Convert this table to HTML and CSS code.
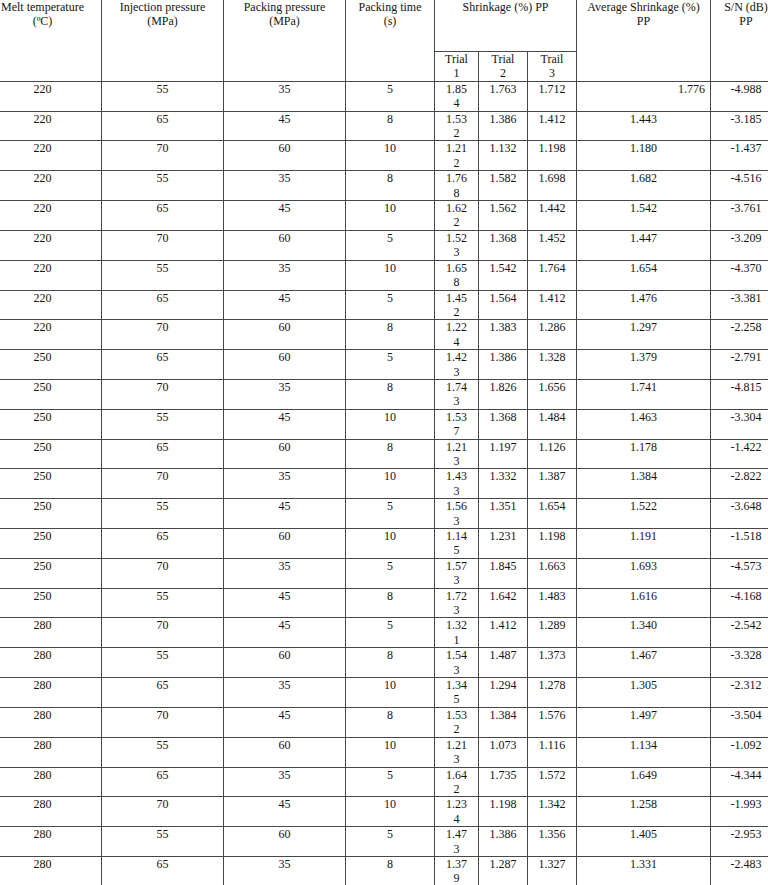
FILE: index.html
```html
<!DOCTYPE html>
<html lang="en">
<head>
<meta charset="utf-8">
<title>Shrinkage table</title>
<link rel="stylesheet" href="styles.css">
</head>
<body>
<table class="data-table">
  <colgroup>
    <col class="c-melt">
    <col class="c-inj">
    <col class="c-pack">
    <col class="c-time">
    <col class="c-t1">
    <col class="c-t2">
    <col class="c-t3">
    <col class="c-avg">
    <col class="c-sn">
  </colgroup>
  <thead>
    <tr class="head-main">
      <th rowspan="2">Melt temperature<br>(ºC)</th>
      <th rowspan="2">Injection pressure (MPa)</th>
      <th rowspan="2">Packing pressure (MPa)</th>
      <th rowspan="2">Packing time (s)</th>
      <th colspan="3">Shrinkage (%) PP</th>
      <th rowspan="2">Average Shrinkage (%) PP</th>
      <th rowspan="2">S/N (dB) PP</th>
    </tr>
    <tr class="head-sub">
      <th class="trial">Trial 1</th>
      <th class="trial">Trial 2</th>
      <th class="trial">Trail 3</th>
    </tr>
  </thead>
  <tbody>
    <tr><td>220</td><td>55</td><td>35</td><td>5</td><td class="narrow">1.854</td><td>1.763</td><td>1.712</td><td class="right">1.776</td><td>-4.988</td></tr>
    <tr><td>220</td><td>65</td><td>45</td><td>8</td><td class="narrow">1.532</td><td>1.386</td><td>1.412</td><td>1.443</td><td>-3.185</td></tr>
    <tr><td>220</td><td>70</td><td>60</td><td>10</td><td class="narrow">1.212</td><td>1.132</td><td>1.198</td><td>1.180</td><td>-1.437</td></tr>
    <tr><td>220</td><td>55</td><td>35</td><td>8</td><td class="narrow">1.768</td><td>1.582</td><td>1.698</td><td>1.682</td><td>-4.516</td></tr>
    <tr><td>220</td><td>65</td><td>45</td><td>10</td><td class="narrow">1.622</td><td>1.562</td><td>1.442</td><td>1.542</td><td>-3.761</td></tr>
    <tr><td>220</td><td>70</td><td>60</td><td>5</td><td class="narrow">1.523</td><td>1.368</td><td>1.452</td><td>1.447</td><td>-3.209</td></tr>
    <tr><td>220</td><td>55</td><td>35</td><td>10</td><td class="narrow">1.658</td><td>1.542</td><td>1.764</td><td>1.654</td><td>-4.370</td></tr>
    <tr><td>220</td><td>65</td><td>45</td><td>5</td><td class="narrow">1.452</td><td>1.564</td><td>1.412</td><td>1.476</td><td>-3.381</td></tr>
    <tr><td>220</td><td>70</td><td>60</td><td>8</td><td class="narrow">1.224</td><td>1.383</td><td>1.286</td><td>1.297</td><td>-2.258</td></tr>
    <tr><td>250</td><td>65</td><td>60</td><td>5</td><td class="narrow">1.423</td><td>1.386</td><td>1.328</td><td>1.379</td><td>-2.791</td></tr>
    <tr><td>250</td><td>70</td><td>35</td><td>8</td><td class="narrow">1.743</td><td>1.826</td><td>1.656</td><td>1.741</td><td>-4.815</td></tr>
    <tr><td>250</td><td>55</td><td>45</td><td>10</td><td class="narrow">1.537</td><td>1.368</td><td>1.484</td><td>1.463</td><td>-3.304</td></tr>
    <tr><td>250</td><td>65</td><td>60</td><td>8</td><td class="narrow">1.213</td><td>1.197</td><td>1.126</td><td>1.178</td><td>-1.422</td></tr>
    <tr><td>250</td><td>70</td><td>35</td><td>10</td><td class="narrow">1.433</td><td>1.332</td><td>1.387</td><td>1.384</td><td>-2.822</td></tr>
    <tr><td>250</td><td>55</td><td>45</td><td>5</td><td class="narrow">1.563</td><td>1.351</td><td>1.654</td><td>1.522</td><td>-3.648</td></tr>
    <tr><td>250</td><td>65</td><td>60</td><td>10</td><td class="narrow">1.145</td><td>1.231</td><td>1.198</td><td>1.191</td><td>-1.518</td></tr>
    <tr><td>250</td><td>70</td><td>35</td><td>5</td><td class="narrow">1.573</td><td>1.845</td><td>1.663</td><td>1.693</td><td>-4.573</td></tr>
    <tr><td>250</td><td>55</td><td>45</td><td>8</td><td class="narrow">1.723</td><td>1.642</td><td>1.483</td><td>1.616</td><td>-4.168</td></tr>
    <tr><td>280</td><td>70</td><td>45</td><td>5</td><td class="narrow">1.321</td><td>1.412</td><td>1.289</td><td>1.340</td><td>-2.542</td></tr>
    <tr><td>280</td><td>55</td><td>60</td><td>8</td><td class="narrow">1.543</td><td>1.487</td><td>1.373</td><td>1.467</td><td>-3.328</td></tr>
    <tr><td>280</td><td>65</td><td>35</td><td>10</td><td class="narrow">1.345</td><td>1.294</td><td>1.278</td><td>1.305</td><td>-2.312</td></tr>
    <tr><td>280</td><td>70</td><td>45</td><td>8</td><td class="narrow">1.532</td><td>1.384</td><td>1.576</td><td>1.497</td><td>-3.504</td></tr>
    <tr><td>280</td><td>55</td><td>60</td><td>10</td><td class="narrow">1.213</td><td>1.073</td><td>1.116</td><td>1.134</td><td>-1.092</td></tr>
    <tr><td>280</td><td>65</td><td>35</td><td>5</td><td class="narrow">1.642</td><td>1.735</td><td>1.572</td><td>1.649</td><td>-4.344</td></tr>
    <tr><td>280</td><td>70</td><td>45</td><td>10</td><td class="narrow">1.234</td><td>1.198</td><td>1.342</td><td>1.258</td><td>-1.993</td></tr>
    <tr><td>280</td><td>55</td><td>60</td><td>5</td><td class="narrow">1.473</td><td>1.386</td><td>1.356</td><td>1.405</td><td>-2.953</td></tr>
    <tr><td>280</td><td>65</td><td>35</td><td>8</td><td class="narrow">1.379</td><td>1.287</td><td>1.327</td><td>1.331</td><td>-2.483</td></tr>
  </tbody>
</table>
</body>
</html>
```

FILE: styles.css
```css
html, body {
  margin: 0;
  padding: 0;
  background: #ffffff;
  overflow: hidden;
}

body {
  font-family: "Liberation Serif", "Times New Roman", serif;
  font-size: 12px;
  line-height: 14.4px;
  color: #141414;
}

.data-table {
  border-collapse: collapse;
  table-layout: fixed;
  width: 798px;
  margin: -1px 0 0 -17px;
}

.c-melt { width: 118px; }
.c-inj { width: 122px; }
.c-pack { width: 122px; }
.c-time { width: 89px; }
.c-t1 { width: 44px; }
.c-t2 { width: 49px; }
.c-t3 { width: 49px; }
.c-avg { width: 134px; }
.c-sn { width: 71px; }

.data-table th,
.data-table td {
  border: 1px solid #474747;
  padding: 0 5px;
  text-align: center;
  vertical-align: top;
  font-weight: normal;
}

.head-main {
  height: 52px;
}

.data-table .trial {
  padding: 0 9px;
}

.data-table .narrow {
  padding: 0 9px;
  word-break: break-all;
}

.data-table .right {
  text-align: right;
}
```
